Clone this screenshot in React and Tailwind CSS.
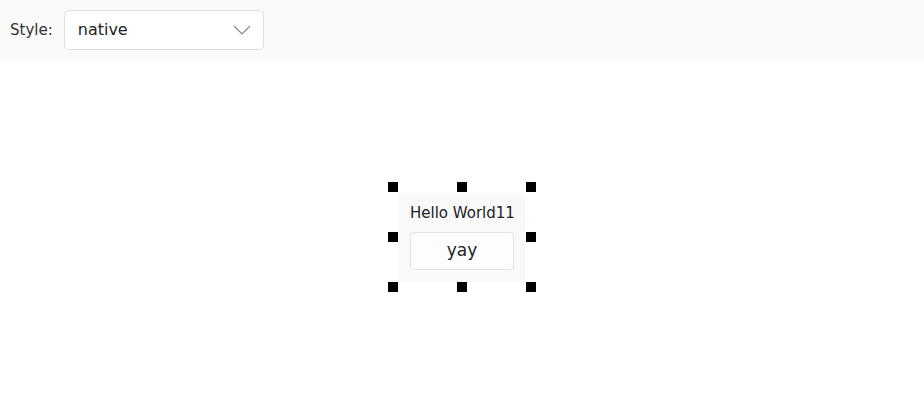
import React from 'react';

const font = { fontFamily: '"DejaVu Sans", sans-serif' };

// Selection handles around the selected widget
const Handle = ({ className }) => (
  <div className={`absolute w-[10px] h-[10px] bg-black ${className}`} />
);

export default function App() {
  return (
    <div
      className="w-[924px] h-[415px] flex flex-col bg-white text-[#222]"
      style={{ fontFamily: '"DejaVu Sans", sans-serif' }}
    >
      {/* Toolbar */}
      <div className="h-[60px] bg-[#fafafa] flex items-center px-[10px] gap-[11px]">
        <span className="text-[15px] text-[#333]">Style:</span>
        <div className="w-[200px] h-[40px] bg-white border border-[#e0e0e0] rounded-[5px] flex items-center justify-between pl-[13px] pr-[12px]">
          <span className="text-[16px] text-[#222]">native</span>
          <svg width="18" height="10" viewBox="0 0 18 10" fill="none">
            <path d="M1 1l8 8 8-8" stroke="#888" strokeWidth="1.2" />
          </svg>
        </div>
      </div>

      {/* Canvas */}
      <div className="flex-1 flex items-center justify-center">
        <div className="relative">
          <div className="w-[126px] h-[89px] bg-[#f9f9f9] pl-[11px] pr-[10px] pt-[10px] flex flex-col">
            <div className="h-[20px] text-[15px] leading-[20px] whitespace-nowrap text-[#222]">
              Hello World11
            </div>
            <button
              className="mt-[9px] w-[104px] h-[38px] bg-[#fdfdfd] border border-[#e3e3e3] rounded-[4px] text-[17px] text-[#222] flex items-center justify-center"
              style={font}
            >
              yay
            </button>
          </div>
          <Handle className="left-[-11px] top-[-11px]" />
          <Handle className="left-[58px] top-[-11px]" />
          <Handle className="right-[-11px] top-[-11px]" />
          <Handle className="left-[-11px] top-[39px]" />
          <Handle className="right-[-11px] top-[39px]" />
          <Handle className="left-[-11px] bottom-[-10px]" />
          <Handle className="left-[58px] bottom-[-10px]" />
          <Handle className="right-[-11px] bottom-[-10px]" />
        </div>
      </div>
    </div>
  );
}
